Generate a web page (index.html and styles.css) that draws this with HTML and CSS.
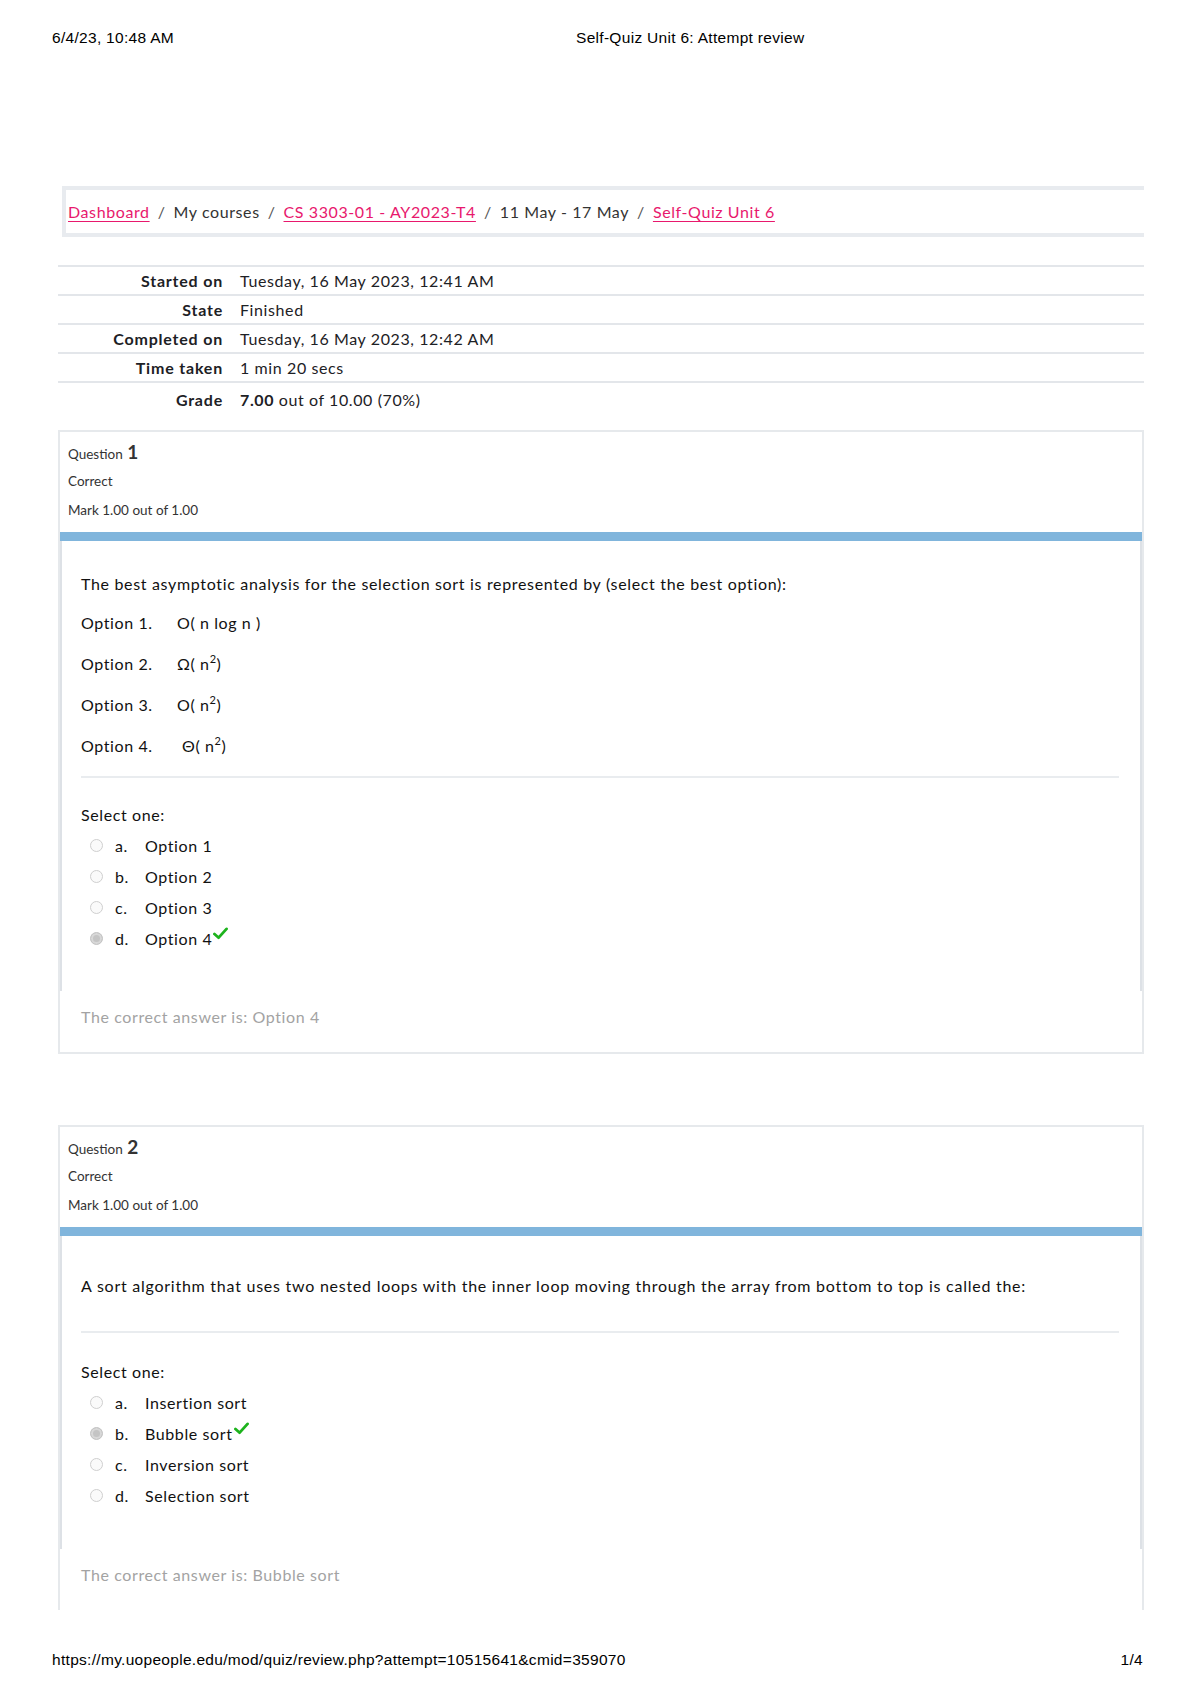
FILE: index.html
```html
<!DOCTYPE html>
<html lang="en">
<head>
<meta charset="utf-8">
<title>Self-Quiz Unit 6: Attempt review</title>
<link rel="stylesheet" href="styles.css">
</head>
<body>
<div class="page">
  <header class="print-header">
    <span class="ph-date">6/4/23, 10:48 AM</span>
    <span class="ph-title">Self-Quiz Unit 6: Attempt review</span>
  </header>

  <main class="main">
    <nav class="breadcrumb">
      <a href="#" class="bc-link">Dashboard</a><span class="sep">/</span><span class="bc-text">My courses</span><span class="sep">/</span><a href="#" class="bc-link">CS 3303-01 - AY2023-T4</a><span class="sep">/</span><span class="bc-text">11 May - 17 May</span><span class="sep">/</span><a href="#" class="bc-link">Self-Quiz Unit 6</a>
    </nav>

    <div class="summary">
      <div class="srow"><div class="slabel">Started on</div><div class="sval">Tuesday, 16 May 2023, 12:41 AM</div></div>
      <div class="srow"><div class="slabel">State</div><div class="sval">Finished</div></div>
      <div class="srow"><div class="slabel">Completed on</div><div class="sval">Tuesday, 16 May 2023, 12:42 AM</div></div>
      <div class="srow"><div class="slabel">Time taken</div><div class="sval">1 min 20 secs</div></div>
      <div class="srow srow-last"><div class="slabel">Grade</div><div class="sval"><b>7.00</b> out of 10.00 (70%)</div></div>
    </div>

    <section class="que">
      <div class="info">
        <div class="qno">Question <span class="num">1</span></div>
        <div class="state">Correct</div>
        <div class="grade">Mark 1.00 out of 1.00</div>
      </div>
      <div class="bar"></div>
      <div class="formulation">
        <p class="qtext">The best asymptotic analysis for the selection sort is represented by (select the best option):</p>
        <p class="opt"><span class="optl">Option 1.</span>O( n log n )</p>
        <p class="opt"><span class="optl">Option 2.</span>Ω( n<sup>2</sup>)</p>
        <p class="opt"><span class="optl">Option 3.</span>O( n<sup>2</sup>)</p>
        <p class="opt"><span class="optl">Option 4.</span><span class="theta">Θ( n<sup>2</sup>)</span></p>
        <hr class="sep-line">
        <div class="prompt">Select one:</div>
        <div class="answers">
          <div class="ans"><span class="radio"></span><span class="letter">a.</span><span class="atext">Option 1</span></div>
          <div class="ans"><span class="radio"></span><span class="letter">b.</span><span class="atext">Option 2</span></div>
          <div class="ans"><span class="radio"></span><span class="letter">c.</span><span class="atext">Option 3</span></div>
          <div class="ans"><span class="radio checked"></span><span class="letter">d.</span><span class="atext">Option 4</span><svg class="tick" viewBox="0 0 16 14" width="15" height="13"><path d="M1.5 7.5 L6 11.5 L14.5 2" fill="none" stroke="#1db31d" stroke-width="3" stroke-linecap="round" stroke-linejoin="round"/></svg></div>
        </div>
      </div>
      <div class="outcome">The correct answer is: Option 4</div>
    </section>

    <section class="que que-cut">
      <div class="info">
        <div class="qno">Question <span class="num">2</span></div>
        <div class="state">Correct</div>
        <div class="grade">Mark 1.00 out of 1.00</div>
      </div>
      <div class="bar"></div>
      <div class="formulation f2">
        <p class="qtext qtext2">A sort algorithm that uses two nested loops with the inner loop moving through the array from bottom to top is called the:</p>
        <hr class="sep-line sep2">
        <div class="prompt prompt2">Select one:</div>
        <div class="answers">
          <div class="ans"><span class="radio"></span><span class="letter">a.</span><span class="atext">Insertion sort</span></div>
          <div class="ans"><span class="radio checked"></span><span class="letter">b.</span><span class="atext">Bubble sort</span><svg class="tick" viewBox="0 0 16 14" width="15" height="13"><path d="M1.5 7.5 L6 11.5 L14.5 2" fill="none" stroke="#1db31d" stroke-width="3" stroke-linecap="round" stroke-linejoin="round"/></svg></div>
          <div class="ans"><span class="radio"></span><span class="letter">c.</span><span class="atext">Inversion sort</span></div>
          <div class="ans"><span class="radio"></span><span class="letter">d.</span><span class="atext">Selection sort</span></div>
        </div>
      </div>
      <div class="outcome">The correct answer is: Bubble sort</div>
    </section>
  </main>

  <footer class="print-footer">
    <span>https://my.uopeople.edu/mod/quiz/review.php?attempt=10515641&amp;cmid=359070</span>
    <span>1/4</span>
  </footer>
</div>
</body>
</html>
```

FILE: styles.css
```css
* { box-sizing: border-box; }

html, body {
  margin: 0;
  padding: 0;
  background: #ffffff;
}

.page {
  width: 1200px;
  height: 1698px;
  overflow: hidden;
  font-family: "Lato", "Liberation Sans", sans-serif;
  color: #1d2125;
}

.print-header {
  display: flex;
  padding: 30px 0 0 52px;
  height: 46px;
  font-family: "Liberation Sans", Arial, sans-serif;
  font-size: 15.5px;
  letter-spacing: 0.3px;
  line-height: 16px;
  color: #000;
}

.ph-date {
  width: 524px;
}

.main {
  padding: 140px 56px 0 58px;
  letter-spacing: 0.6px;
}

/* breadcrumb */
.breadcrumb {
  margin-left: 4px;
  height: 51px;
  border-top: 4px solid #e8ebef;
  border-bottom: 4px solid #e8ebef;
  border-left: 4px solid #e8ebef;
  padding-left: 2px;
  display: flex;
  align-items: center;
  font-size: 16px;
  line-height: 43px;
  color: #333;
}

.bc-link {
  color: #e8186d;
  text-decoration: underline;
  text-underline-offset: 3px;
}

.sep {
  color: #555;
  padding: 0 8px;
}

/* summary table */
.summary {
  margin-top: 28px;
  font-size: 16px;
}

.srow {
  display: flex;
  border-top: 2px solid #e3e6ea;
  height: 29px;
  align-items: center;
}

.srow-last {
  height: 34px;
}

.slabel {
  width: 165px;
  text-align: right;
  font-weight: bold;
  padding-right: 0;
  letter-spacing: 0.8px;
}

.sval {
  padding-left: 17px;
}

/* question */
.que {
  margin-top: 15px;
  border: 2px solid #e6e9ec;
}

.que + .que {
  margin-top: 71px;
}

.que-cut {
  border-bottom: none;
}

.info {
  padding: 8px 0 7px 8px;
  color: #333;
  letter-spacing: 0;
}

.qno {
  height: 24px;
  line-height: 24px;
  font-size: 13.5px;
}

.qno .num {
  font-size: 19px;
  font-weight: bold;
  margin-left: 1px;
}

.state {
  margin-top: 3px;
  height: 28px;
  line-height: 28px;
  font-size: 13.5px;
}

.grade {
  margin-top: 1px;
  height: 29px;
  line-height: 29px;
  font-size: 13.5px;
}

.bar {
  height: 9px;
  background: #80b5dc;
}

.formulation {
  border-left: 2px solid #dde1e6;
  border-right: 2px solid #dde1e6;
  padding: 31px 21px 37px 19px;
  font-size: 16px;
  color: #111;
}

.formulation p {
  margin: 0;
  line-height: 24px;
}

.qtext {
  letter-spacing: 0.67px;
}

.opt {
  margin-top: 17px !important;
}

.qtext + .opt {
  margin-top: 15px !important;
}

.optl {
  display: inline-block;
  width: 96px;
}

.theta {
  padding-left: 5px;
}

sup {
  font-size: 11px;
  line-height: 0;
  position: relative;
  top: -1px;
}

.sep-line {
  margin: 18px 0 0 0;
  border: 0;
  height: 2px;
  background: #e9ecef;
}

.prompt {
  margin-top: 25px;
  line-height: 24px;
}

.answers {
  margin-top: 3px;
}

.ans {
  display: flex;
  align-items: center;
  height: 31px;
  padding-left: 9px;
}

.radio {
  width: 13px;
  height: 13px;
  border-radius: 50%;
  border: 1px solid #cfcfcf;
  background: #fafafa;
  flex: none;
}

.radio.checked {
  background: #c4c4c4;
  border-color: #c4c4c4;
  box-shadow: inset 0 0 0 2px #d8d8d8;
}

.letter {
  width: 30px;
  padding-left: 12px;
  flex: none;
  box-sizing: content-box;
}

.tick {
  margin-top: -10px;
  margin-left: 1px;
}

.outcome {
  padding: 14px 0 23px 21px;
  line-height: 24px;
  font-size: 16px;
  color: #a3a3a3;
}

/* question 2 specifics */
.qtext2 {
  margin-top: 7px !important;
  letter-spacing: 0.75px;
}

.sep2 {
  margin-top: 33px;
}

.prompt2 {
  margin-top: 27px;
}

.f2 {
  padding-bottom: 38px;
}

.print-footer {
  display: flex;
  justify-content: space-between;
  padding: 42px 57px 0 52px;
  font-family: "Liberation Sans", Arial, sans-serif;
  font-size: 15.5px;
  letter-spacing: 0.3px;
  line-height: 16px;
  color: #000;
}
```
